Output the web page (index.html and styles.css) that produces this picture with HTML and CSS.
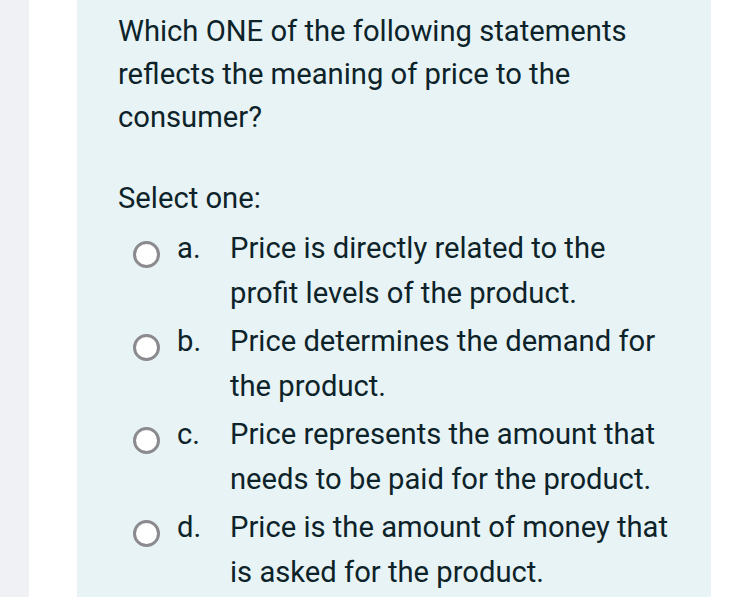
FILE: index.html
```html
<!DOCTYPE html>
<html lang="en">
<head>
<meta charset="utf-8">
<link rel="stylesheet" href="styles.css">
</head>
<body>
<div class="page">
  <div class="sidebar"></div>
  <div class="spacer"></div>
  <main class="panel">
    <p class="question">Which ONE of the following statements reflects the meaning of price to the consumer?</p>
    <p class="prompt">Select one:</p>
    <div class="answers">
      <label class="answer"><span class="radio"></span><span class="letter">a.</span><span class="text">Price is directly related to the profit levels of the product.</span></label>
      <label class="answer"><span class="radio"></span><span class="letter">b.</span><span class="text">Price determines the demand for the product.</span></label>
      <label class="answer"><span class="radio"></span><span class="letter">c.</span><span class="text">Price represents the amount that needs to be paid for the product.</span></label>
      <label class="answer"><span class="radio"></span><span class="letter">d.</span><span class="text">Price is the amount of money that is asked for the product.</span></label>
    </div>
  </main>
</div>
</body>
</html>
```

FILE: styles.css
```css
html, body {
  margin: 0;
  padding: 0;
  background: #ffffff;
}
body {
  font-family: Roboto, "Liberation Sans", sans-serif;
  font-size: 29.2px;
  color: #0d2329;
}
.page {
  display: flex;
  height: 597px;
  overflow: hidden;
}
.sidebar {
  width: 29px;
  flex: none;
  background: #eff1f5;
}
.spacer {
  width: 48px;
  flex: none;
}
.panel {
  width: 634px;
  flex: none;
  box-sizing: border-box;
  background: #e7f3f5;
  padding: 10px 41px 0 41px;
}
.question {
  margin: 0;
  line-height: 43px;
}
.prompt {
  margin: 38px 0 0 0;
  line-height: 43px;
}
.answers {
  display: flex;
  flex-direction: column;
  gap: 3px;
  margin-top: 6px;
  padding-left: 15px;
}
.answer {
  display: flex;
  align-items: flex-start;
  line-height: 45px;
}
.radio {
  flex: none;
  width: 21px;
  height: 21px;
  border: 3px solid #8b8a8e;
  border-radius: 50%;
  background: #ffffff;
  margin-top: 15px;
  margin-right: 17px;
}
.letter {
  flex: none;
  width: 53px;
}
.text {
  width: 445px;
}
```
